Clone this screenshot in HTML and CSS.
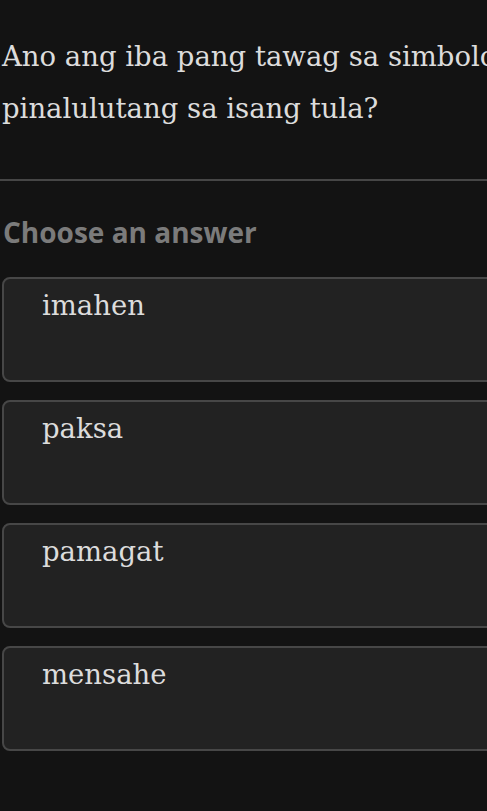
FILE: index.html
```html
<!DOCTYPE html>
<html lang="en">
<head>
    <meta charset="UTF-8">
    <meta name="viewport" content="width=device-width, initial-scale=1.0">
    <title>Quiz</title>
    <link rel="stylesheet" href="styles.css">
</head>
<body>
    <div class="quiz">
        <div class="question">Ano ang iba pang tawag sa simbolong pinalulutang sa isang tula?</div>

        <hr class="divider">

        <h2 class="prompt">Choose an answer</h2>

        <div class="answers">
            <div class="answer">imahen</div>
            <div class="answer">paksa</div>
            <div class="answer">pamagat</div>
            <div class="answer">mensahe</div>
        </div>
    </div>
</body>
</html>
```

FILE: styles.css
```css
html, body {
    margin: 0;
    padding: 0;
    background: #131313;
    overflow: hidden;
}

.quiz {
    width: 540px;
    padding: 0 0 0 2px;
}

.question {
    font-family: 'DejaVu Serif', serif;
    font-size: 27.5px;
    line-height: 52px;
    color: #dcdcdc;
    padding-top: 30px;
    width: 540px;
}

.divider {
    border: none;
    border-top: 2px solid #464646;
    margin: 45px 0 0 -2px;
}

.prompt {
    font-family: 'Open Sans', sans-serif;
    font-weight: 700;
    font-size: 28px;
    color: #7b7b7b;
    margin: 33px 0 0 1px;
    line-height: 37px;
}

.answers {
    display: flex;
    flex-direction: column;
    gap: 18px;
    margin-top: 26px;
}

.answer {
    height: 105px;
    background: #222222;
    border: 2px solid #474747;
    border-radius: 8px;
    font-family: 'DejaVu Serif', serif;
    font-size: 27.5px;
    color: #dcdcdc;
    padding: 6px 38px;
    box-sizing: border-box;
    line-height: 40px;
}
```
